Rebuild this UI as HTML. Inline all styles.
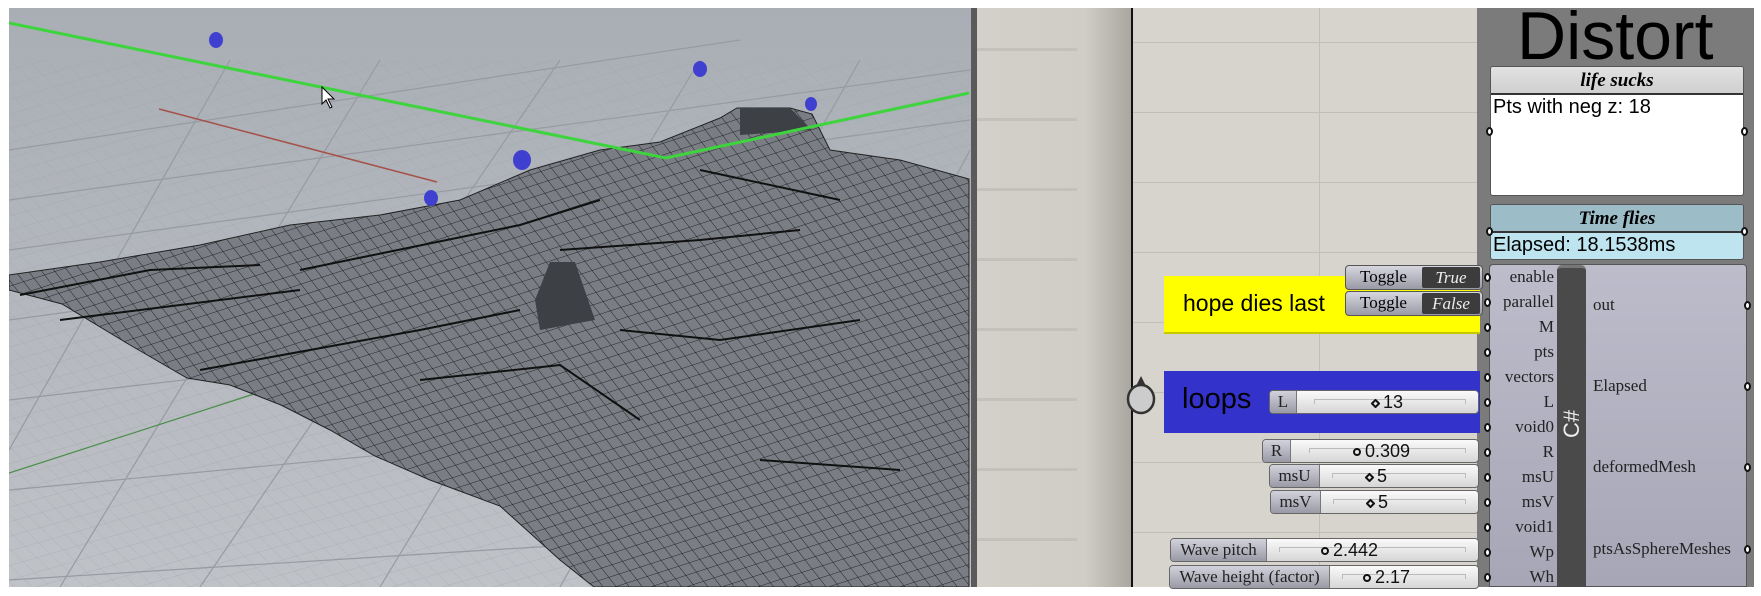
<!DOCTYPE html>
<html><head><meta charset="utf-8"><style>
*{margin:0;padding:0;box-sizing:border-box}
body{width:1761px;height:596px;background:#fff;position:relative;overflow:hidden;font-family:"Liberation Sans",sans-serif}
.a{position:absolute}
.serif{font-family:"Liberation Serif",serif}
.sl{position:absolute;height:24px;border:1px solid #666;border-radius:4px;background:linear-gradient(#fafafa,#d6d6d6);overflow:hidden}
.sl .lb{position:absolute;left:0;top:0;bottom:0;background:linear-gradient(#d2d2dc,#9a9aa6);border-right:1px solid #777;font-family:"Liberation Serif",serif;font-size:17px;color:#222;text-align:center;line-height:22px}
.sl .tk{position:absolute;top:8px;height:5px;border-left:1px solid #bbb;border-right:1px solid #bbb;border-top:1px solid #bbb}
.sl .v{position:absolute;top:0;font-size:18px;line-height:22px;color:#111;font-family:"Liberation Sans",sans-serif}
.sl .v i{display:inline-block;width:8px;height:8px;border:2px solid #111;border-radius:50%;margin-right:4px;vertical-align:1px}
.sl .v i.d{border-radius:1px;transform:rotate(45deg);width:7px;height:7px}
.in{position:absolute;right:0;width:70px;text-align:right;font-family:"Liberation Serif",serif;font-size:17px;color:#222}
.pt{position:absolute;width:7px;height:9px;border:2px solid #111;border-radius:50%;background:#fff}
</style></head><body>

<svg class="a" style="left:9px;top:8px" width="962" height="579" viewBox="9 8 962 579">
<defs>
<linearGradient id="bg" x1="0" y1="0" x2="0" y2="1"><stop offset="0" stop-color="#a9aeb5"/><stop offset="1" stop-color="#bfc2c7"/></linearGradient>
<pattern id="mp" width="11" height="11" patternUnits="userSpaceOnUse" patternTransform="rotate(-18) skewX(20)">
<rect width="11" height="11" fill="#7a7e84"/><path d="M0 0H11M0 0V11" stroke="#1d1f22" stroke-width="1"/></pattern>
<pattern id="gp" width="14" height="14" patternUnits="userSpaceOnUse" patternTransform="rotate(-16) skewX(30)">
<path d="M0 0H14M0 0V14" stroke="#9da1a7" stroke-width=".8" fill="none"/></pattern>
</defs>
<rect x="9" y="8" width="962" height="579" fill="url(#bg)"/>
<rect x="9" y="60" width="962" height="527" fill="url(#gp)" opacity=".6"/>
<g stroke="#979ba1" stroke-width="1.2" fill="none">
<path d="M9 150L740 40M9 200L970 70M9 250L970 120M9 320L970 190M9 400L970 290M9 490L970 400M9 580L970 520"/>
<path d="M200 587L560 60M60 587L380 60M380 587L700 60M560 587L860 60M740 587L970 150M9 450L230 60"/>
</g>
<path d="M159 109L437 182" stroke="#a5524a" stroke-width="1.5"/>
<path d="M9 473L437 335" stroke="#4c8d4c" stroke-width="1.2"/>
<path d="M9 275L100 262L200 245L290 225L380 215L460 200L530 170L600 150L660 142L720 118L737 108L790 108L812 114L830 150L900 160L969 179L969 587L594 587L560 560L500 506L430 480L375 456L330 430L281 405L230 385L187 378L130 345L62 304L9 290Z" fill="url(#mp)" stroke="#222"/>
<path d="M535 300L550 262L575 262L595 320L540 330Z" fill="#3d4045"/>
<path d="M740 108L790 108L812 130L740 135Z" fill="#3d4045"/>
<g stroke="#111" stroke-width="2" fill="none">
<path d="M20 295L150 270L260 265M60 320L300 290M200 370L420 330L520 310M300 270L520 225L600 200M560 250L700 240L800 230M700 170L840 200M620 330L720 340L860 320M420 380L560 365L640 420M760 460L900 470"/>
</g>
<path d="M9 23L666 158L969 93" stroke="#3dd43d" stroke-width="3" fill="none"/>
<g fill="#4040d0"><ellipse cx="216" cy="40" rx="7" ry="8"/><ellipse cx="700" cy="69" rx="7" ry="8"/><ellipse cx="811" cy="104" rx="6" ry="7"/><ellipse cx="522" cy="160" rx="9" ry="10"/><ellipse cx="431" cy="198" rx="7" ry="8"/></g>
<path d="M322 87L322 104L326 100L330 108L332 107L328 99L334 99Z" fill="#fff" stroke="#000"/>
</svg>
<div class="a" style="left:971px;top:8px;width:6px;height:579px;background:#5a5a5a"></div>

<div class="a" style="left:977px;top:8px;width:155px;height:579px;background:linear-gradient(90deg,#d3d0c9 0,#d0cdc6 70%,#a9a6a0 100%)"></div>
<div class="a" style="left:977px;top:8px;width:100px;height:579px;background:repeating-linear-gradient(180deg,transparent 0 40px,#c4c1ba 40px 43px,transparent 43px 70px)"></div>
<div class="a" style="left:1131px;top:8px;width:2px;height:579px;background:#111"></div>
<div class="a" style="left:1133px;top:8px;width:345px;height:579px;background:#d7d4cd"></div>
<div class="a" style="left:1133px;top:8px;width:345px;height:579px;background:repeating-linear-gradient(180deg,transparent 0 34px,#c2bfb8 34px 35px,transparent 35px 70px)"></div>
<div class="a" style="left:1319px;top:8px;width:1px;height:579px;background:#c2bfb8"></div>
<div class="a" style="left:1477px;top:8px;width:277px;height:579px;background:#7b7b7b"></div>
<div class="a" style="left:1517px;top:2px;font-size:68px;line-height:68px;color:#000">Distort</div>

<div class="a" style="left:1490px;top:66px;width:254px;height:130px;background:#fff;border:1px solid #555;border-radius:3px;overflow:hidden">
<div class="serif" style="height:28px;background:linear-gradient(#e2e2e2,#cfcfcf);border-bottom:2px solid #333;text-align:center;font-style:italic;font-weight:bold;font-size:19px;line-height:27px">life sucks</div>
<div style="font-size:20px;padding-left:2px;line-height:24px">Pts with neg z: 18</div></div>
<div class="a" style="left:1490px;top:204px;width:254px;height:56px;background:#bde4ef;border:1px solid #555;border-radius:3px;overflow:hidden">
<div class="serif" style="height:28px;background:#9cbcc7;border-bottom:2px solid #333;text-align:center;font-style:italic;font-weight:bold;font-size:19px;line-height:27px">Time flies</div>
<div style="font-size:20px;padding-left:2px;line-height:24px">Elapsed: 18.1538ms</div></div>
<div class="pt" style="left:1486px;top:127px"></div><div class="pt" style="left:1741px;top:127px"></div>
<div class="pt" style="left:1486px;top:227px"></div><div class="pt" style="left:1741px;top:227px"></div>

<div class="a" style="left:1164px;top:276px;width:316px;height:58px;background:#ffff00;border-bottom:2px solid #c8c800"></div>
<div class="a" style="left:1183px;top:290px;font-size:23px;color:#000">hope dies last</div>
<div class="a" style="left:1164px;top:371px;width:316px;height:62px;background:#3333cc"></div>
<div class="a" style="left:1182px;top:383px;font-size:29px;color:#000">loops</div>
<svg class="a" style="left:1126px;top:374px" width="30" height="42"><path d="M15 2L9 14H21Z" fill="#333"/><ellipse cx="15" cy="25" rx="13" ry="14" fill="#ccc" stroke="#333" stroke-width="2.5"/></svg>

<div class="a" style="left:1345px;top:265px;width:138px;height:25px;border:1px solid #555;border-radius:4px;background:linear-gradient(#d6d6de,#9a9aa6)"><span class="a serif" style="left:14px;top:1px;font-size:17px">Toggle</span><div class="a serif" style="left:76px;top:1px;width:58px;height:21px;background:#3c3c3c;color:#eee;font-style:italic;font-size:17px;text-align:center;line-height:21px;border-radius:2px">True</div></div>
<div class="a" style="left:1345px;top:291px;width:138px;height:25px;border:1px solid #555;border-radius:4px;background:linear-gradient(#d6d6de,#9a9aa6)"><span class="a serif" style="left:14px;top:1px;font-size:17px">Toggle</span><div class="a serif" style="left:76px;top:1px;width:58px;height:21px;background:#3c3c3c;color:#eee;font-style:italic;font-size:17px;text-align:center;line-height:21px;border-radius:2px">False</div></div>

<div class="sl" style="left:1269px;top:390px;width:210px"><div class="lb" style="width:27px">L</div><div class="tk" style="left:44px;right:12px"></div><div class="v" style="left:102px"><i class="d"></i>13</div></div>
<div class="sl" style="left:1262px;top:439px;width:217px"><div class="lb" style="width:28px">R</div><div class="tk" style="left:46px;right:12px"></div><div class="v" style="left:90px"><i></i>0.309</div></div>
<div class="sl" style="left:1269px;top:464px;width:210px"><div class="lb" style="width:50px">msU</div><div class="tk" style="left:62px;right:12px"></div><div class="v" style="left:96px"><i class="d"></i>5</div></div>
<div class="sl" style="left:1270px;top:490px;width:209px"><div class="lb" style="width:50px">msV</div><div class="tk" style="left:62px;right:12px"></div><div class="v" style="left:96px"><i class="d"></i>5</div></div>
<div class="sl" style="left:1170px;top:538px;width:309px"><div class="lb" style="width:96px">Wave pitch</div><div class="tk" style="left:108px;right:12px"></div><div class="v" style="left:150px"><i></i>2.442</div></div>
<div class="sl" style="left:1169px;top:565px;width:310px"><div class="lb" style="width:160px">Wave height (factor)</div><div class="tk" style="left:172px;right:12px"></div><div class="v" style="left:193px"><i></i>2.17</div></div>

<div class="a" style="left:1489px;top:264px;width:258px;height:323px;background:linear-gradient(#bcbccb,#a6a6b6);border:1px solid #555;border-radius:4px 4px 0 0"></div>
<div class="a" style="left:1557px;top:265px;width:29px;height:322px;background:#4a4a4a;border-radius:5px 5px 0 0;border-top:3px solid #777"></div>
<div class="a" style="left:1559px;top:412px;width:26px;font-size:22px;color:#eee;transform:rotate(-90deg);text-align:center">C#</div>
<div class="a" style="left:1484px;top:264px;width:70px;height:323px">
<div class="in" style="top:3px">enable</div><div class="in" style="top:28px">parallel</div><div class="in" style="top:53px">M</div><div class="in" style="top:78px">pts</div><div class="in" style="top:103px">vectors</div><div class="in" style="top:128px">L</div><div class="in" style="top:153px">void0</div><div class="in" style="top:178px">R</div><div class="in" style="top:203px">msU</div><div class="in" style="top:228px">msV</div><div class="in" style="top:253px">void1</div><div class="in" style="top:278px">Wp</div><div class="in" style="top:303px">Wh</div></div>
<div class="a serif" style="left:1593px;top:295px;font-size:17px;color:#222">out</div>
<div class="a serif" style="left:1593px;top:376px;font-size:17px;color:#222">Elapsed</div>
<div class="a serif" style="left:1593px;top:457px;font-size:17px;color:#222">deformedMesh</div>
<div class="a serif" style="left:1593px;top:539px;font-size:17px;color:#222">ptsAsSphereMeshes</div>
<div class="pt" style="left:1484px;top:273px"></div><div class="pt" style="left:1484px;top:298px"></div><div class="pt" style="left:1484px;top:323px"></div><div class="pt" style="left:1484px;top:348px"></div><div class="pt" style="left:1484px;top:373px"></div><div class="pt" style="left:1484px;top:398px"></div><div class="pt" style="left:1484px;top:423px"></div><div class="pt" style="left:1484px;top:448px"></div><div class="pt" style="left:1484px;top:473px"></div><div class="pt" style="left:1484px;top:498px"></div><div class="pt" style="left:1484px;top:523px"></div><div class="pt" style="left:1484px;top:548px"></div><div class="pt" style="left:1484px;top:573px"></div>
<div class="pt" style="left:1744px;top:301px"></div><div class="pt" style="left:1744px;top:382px"></div><div class="pt" style="left:1744px;top:463px"></div><div class="pt" style="left:1744px;top:545px"></div>
</body></html>
